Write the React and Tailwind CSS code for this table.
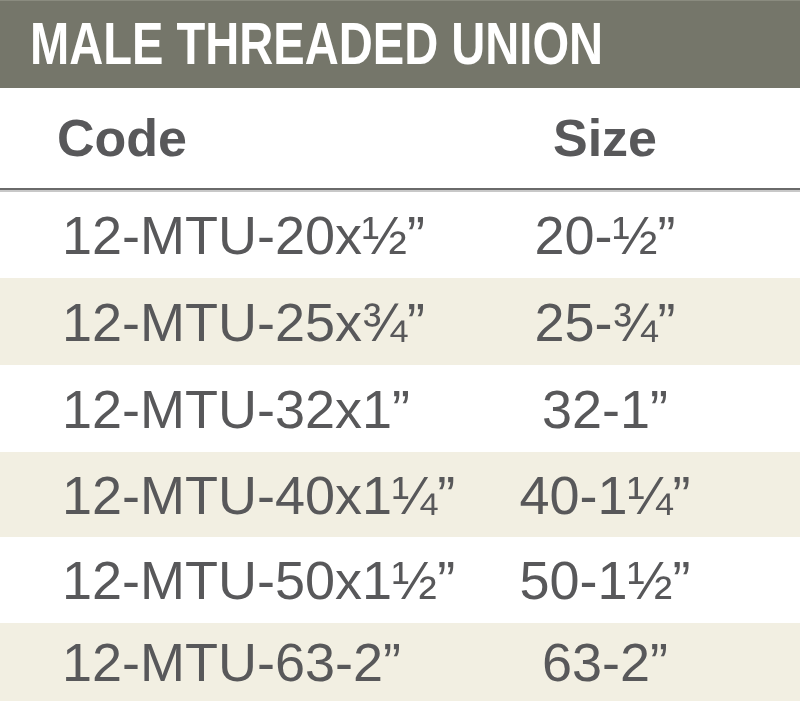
export default function App() {
  const rows = [
    ["12-MTU-20x½”", "20-½”", "h-[86px]", "bg-white"],
    ["12-MTU-25x¾”", "25-¾”", "h-[87px]", "bg-[#f2efe2]"],
    ["12-MTU-32x1”", "32-1”", "h-[87px]", "bg-white"],
    ["12-MTU-40x1¼”", "40-1¼”", "h-[85px]", "bg-[#f2efe2]"],
    ["12-MTU-50x1½”", "50-1½”", "h-[86px]", "bg-white"],
    ["12-MTU-63-2”", "63-2”", "h-[78px]", "bg-[#f2efe2]"],
  ];
  return (
    <div className="w-[800px] h-[702px] bg-white overflow-hidden" style={{ fontFamily: '"Liberation Sans", Arial, sans-serif' }}>
      <div className="h-[88px] bg-[#75766a] flex items-center pl-[30px] border-t border-[#8a8b7f]">
        <h1 className="text-white font-bold text-[60px] leading-none whitespace-nowrap origin-left scale-x-[0.785] mt-[-2px]">
          MALE THREADED UNION
        </h1>
      </div>
      <div className="grid grid-cols-[410px_1fr] h-[100px] items-center text-[#58585a] font-bold text-[52px] leading-none">
        <div className="pl-[57px] whitespace-nowrap">Code</div>
        <div className="text-center whitespace-nowrap">Size</div>
      </div>
      <div className="h-[2px] bg-[#6a6a6a]" />
      <div className="h-[2px] bg-[#c8c8c8]" />
      {rows.map(([code, size, h, bg]) => (
        <div key={code} className={`grid grid-cols-[410px_1fr] items-center text-[#58585a] text-[54px] leading-none ${h} ${bg}`}>
          <div className="pl-[62px] whitespace-nowrap">{code}</div>
          <div className="text-center whitespace-nowrap">{size}</div>
        </div>
      ))}
    </div>
  );
}
